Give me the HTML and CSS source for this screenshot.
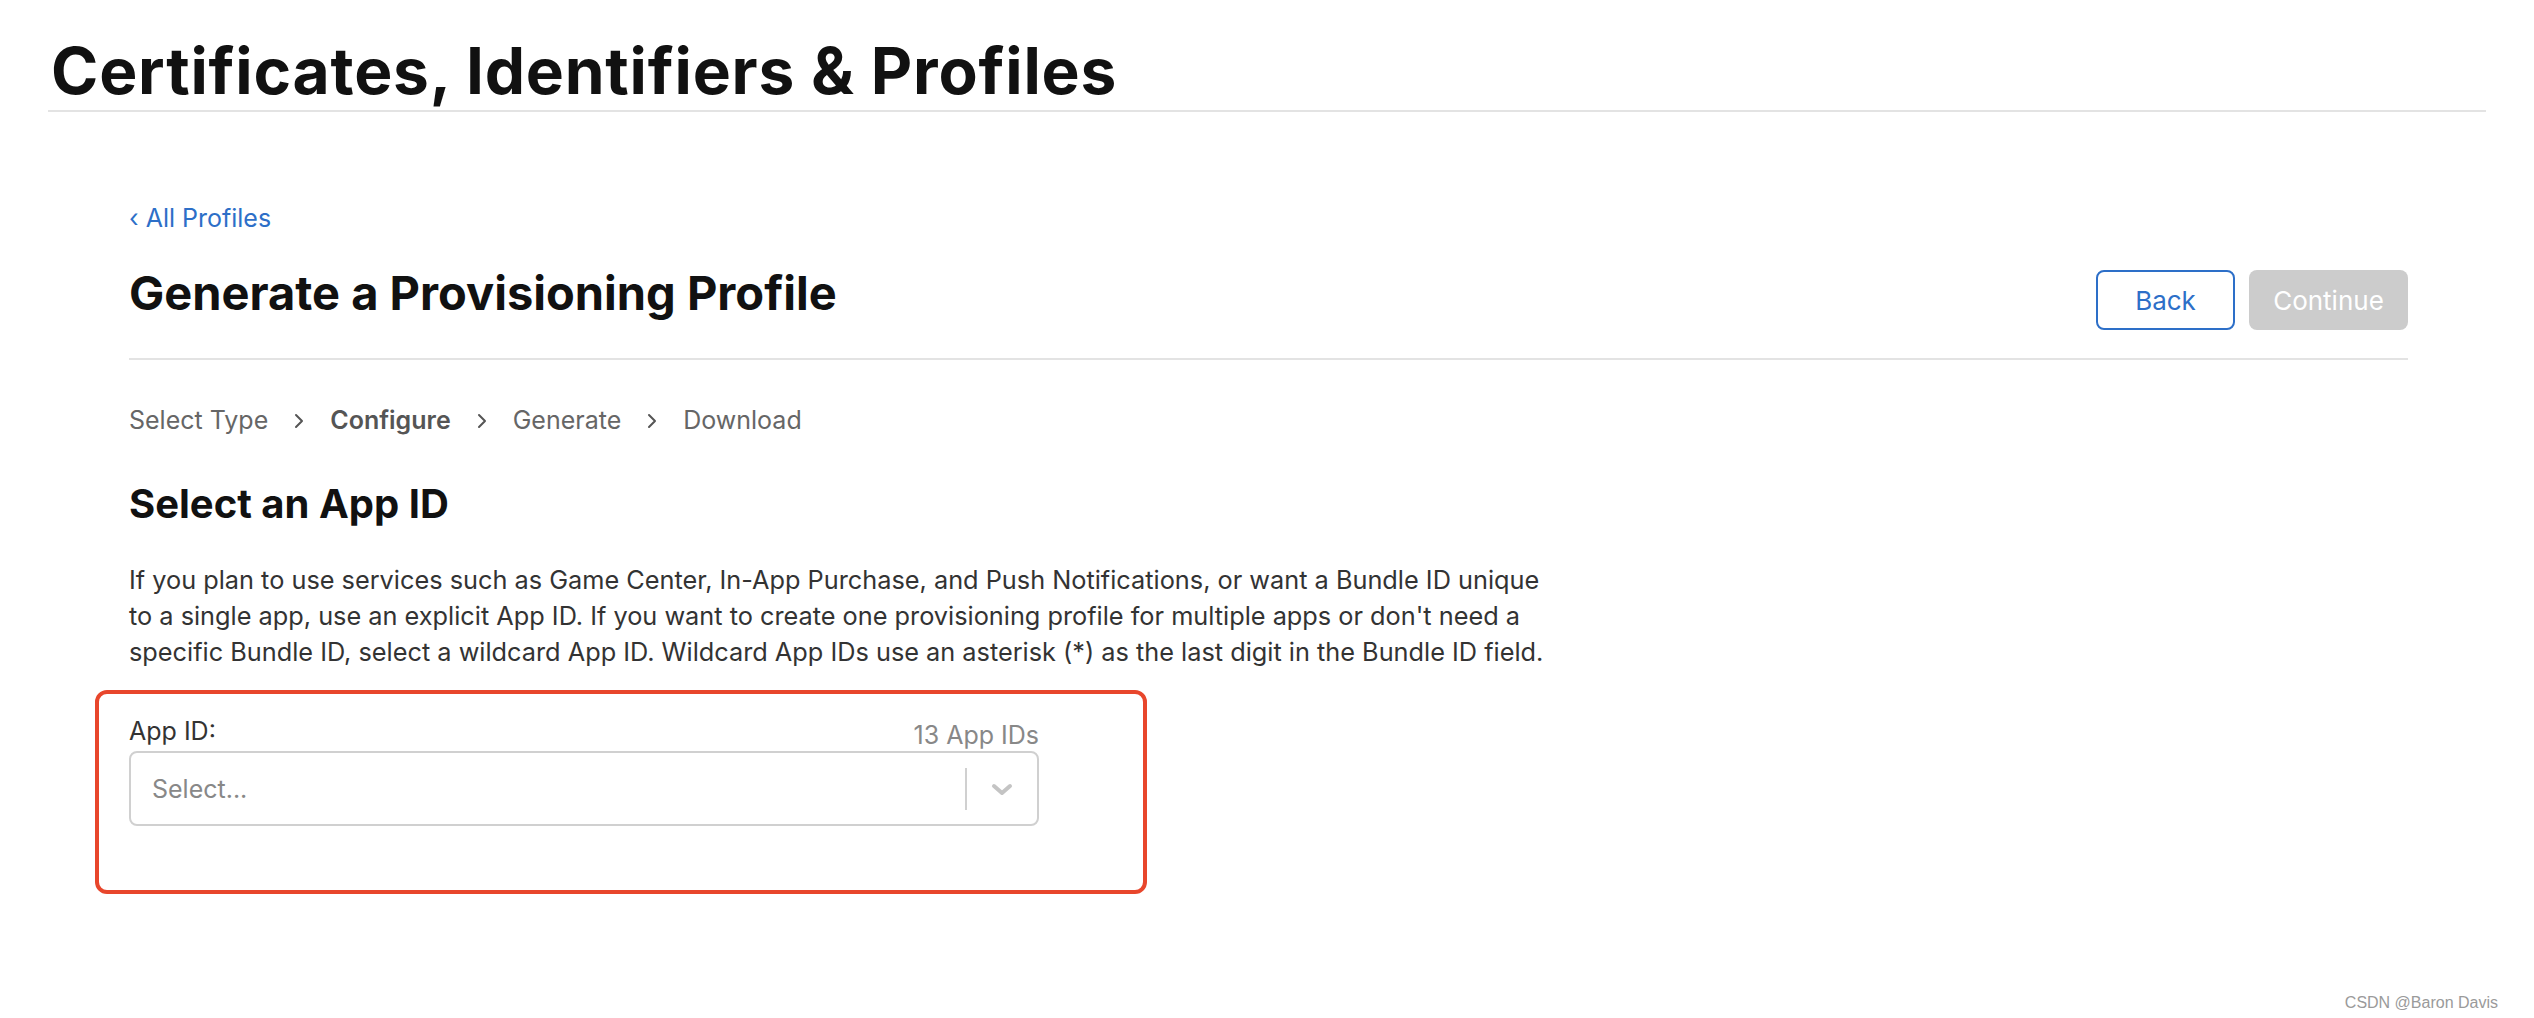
FILE: index.html
```html
<!DOCTYPE html>
<html lang="en">
<head>
    <meta charset="UTF-8">
    <title>Certificates, Identifiers &amp; Profiles</title>
    <link rel="stylesheet" href="styles.css">
</head>
<body>
<header class="page-header">
    <h1>Certificates, Identifiers &amp; Profiles</h1>
</header>

<main class="content">
    <a class="back-link" href="#">&lsaquo; All Profiles</a>

    <div class="title-row">
        <h2>Generate a Provisioning Profile</h2>
        <div class="actions">
            <button class="btn btn-outline">Back</button>
            <button class="btn btn-disabled" disabled>Continue</button>
        </div>
    </div>

    <!-- 手順 -->
    <ol class="steps">
        <li>Select Type</li>
        <li class="sep"><svg width="10" height="16" viewBox="0 0 10 16"><path d="M2 2 L8 8 L2 14" fill="none" stroke="#555" stroke-width="2" stroke-linecap="round" stroke-linejoin="round"/></svg></li>
        <li class="current">Configure</li>
        <li class="sep"><svg width="10" height="16" viewBox="0 0 10 16"><path d="M2 2 L8 8 L2 14" fill="none" stroke="#555" stroke-width="2" stroke-linecap="round" stroke-linejoin="round"/></svg></li>
        <li>Generate</li>
        <li class="sep"><svg width="10" height="16" viewBox="0 0 10 16"><path d="M2 2 L8 8 L2 14" fill="none" stroke="#555" stroke-width="2" stroke-linecap="round" stroke-linejoin="round"/></svg></li>
        <li>Download</li>
    </ol>

    <h3>Select an App ID</h3>

    <p class="intro">If you plan to use services such as Game Center, In-App Purchase, and Push Notifications, or want a Bundle ID unique<br>
        to a single app, use an explicit App ID. If you want to create one provisioning profile for multiple apps or don't need a<br>
        specific Bundle ID, select a wildcard App ID. Wildcard App IDs use an asterisk (*) as the last digit in the Bundle ID field.</p>

    <div class="highlight">
        <div class="field">
            <div class="field-head">
                <label>App ID:</label>
                <span class="count">13 App IDs</span>
            </div>
            <div class="select">
                <span class="placeholder">Select...</span>
                <span class="divider"></span>
                <svg class="chevron" width="22" height="13" viewBox="0 0 22 13">
                    <path d="M3 3 L11 10 L19 3" fill="none" stroke="#c4c4c4" stroke-width="4" stroke-linecap="round" stroke-linejoin="round"/>
                </svg>
            </div>
        </div>
    </div>
</main>

<div class="watermark">CSDN @Baron Davis</div>
</body>
</html>
```

FILE: styles.css
```css
body {
    margin: 0;
    font-family: Inter, "Noto Sans", sans-serif;
    background-color: #ffffff;
    color: #1d1d1f;
    height: 1018px;
    position: relative;
    overflow: hidden;
}

.page-header {
    margin: 0 48px;
    border-bottom: 2px solid #e3e3e3;
}
.page-header h1 {
    margin: 0;
    padding: 32px 0 0 3px;
    height: 78px;
    font-size: 64px;
    font-weight: 700;
    line-height: 78px;
    letter-spacing: 0.8px;
    color: #111111;
}

.content {
    padding: 0 126px 0 129px;
}

.back-link {
    display: inline-block;
    margin-top: 91px;
    font-size: 25px;
    line-height: 30px;
    color: #2d6fc8;
    text-decoration: none;
}

.title-row {
    display: flex;
    justify-content: space-between;
    align-items: flex-start;
    margin-top: 22px;
    padding-bottom: 28px;
    border-bottom: 2px solid #e3e3e3;
}
.title-row h2 {
    margin: 8px 0 0;
    font-size: 47px;
    font-weight: 700;
    line-height: 60px;
    color: #111111;
}

.actions {
    display: flex;
    gap: 14px;
    margin-top: 15px;
}
.btn {
    height: 60px;
    border-radius: 8px;
    font-family: Inter, "Noto Sans", sans-serif;
    font-size: 26px;
    padding: 0;
}
.btn-outline {
    width: 139px;
    background-color: #ffffff;
    border: 2px solid #2d6fc8;
    color: #2d6fc8;
}
.btn-disabled {
    width: 159px;
    background-color: #cccccc;
    border: none;
    color: #ffffff;
}

.steps {
    display: flex;
    align-items: center;
    gap: 26px;
    list-style: none;
    margin: 37px 0 0;
    padding: 0;
    font-size: 25px;
    line-height: 46px;
    color: #666666;
}
.steps .current {
    font-weight: 600;
    color: #555555;
}
.steps .sep {
    display: flex;
    align-items: center;
    padding-top: 2px;
}

h3 {
    margin: 33px 0 0;
    font-size: 40px;
    font-weight: 700;
    line-height: 56px;
    color: #111111;
}

.intro {
    margin: 30px 0 0;
    font-size: 25.3px;
    line-height: 36px;
    color: #333333;
    white-space: nowrap;
}

.highlight {
    margin: 20px 0 0 -34px;
    width: 1052px;
    height: 204px;
    border: 4px solid #e8462c;
    border-radius: 12px;
    box-sizing: border-box;
}

.field {
    width: 910px;
    margin: 22px 0 0 30px;
}
.field-head {
    display: flex;
    justify-content: space-between;
    align-items: baseline;
    height: 36px;
}
.field-head label {
    font-size: 25px;
    color: #333333;
}
.field-head .count {
    font-size: 25px;
    color: #888888;
    position: relative;
    top: 4px;
}

.select {
    display: flex;
    align-items: center;
    height: 75px;
    margin-top: -1px;
    border: 2px solid #d0d0d0;
    border-radius: 8px;
    box-sizing: border-box;
}
.placeholder {
    flex: 1;
    padding-left: 21px;
    font-size: 25px;
    color: #888888;
}
.divider {
    width: 2px;
    height: 42px;
    background-color: #d0d0d0;
}
.chevron {
    margin: 2px 24px 0 24px;
}

.watermark {
    position: absolute;
    right: 36px;
    bottom: 6px;
    font-family: "Liberation Sans", Arial, sans-serif;
    font-size: 16px;
    color: #9a9a9a;
}
```
